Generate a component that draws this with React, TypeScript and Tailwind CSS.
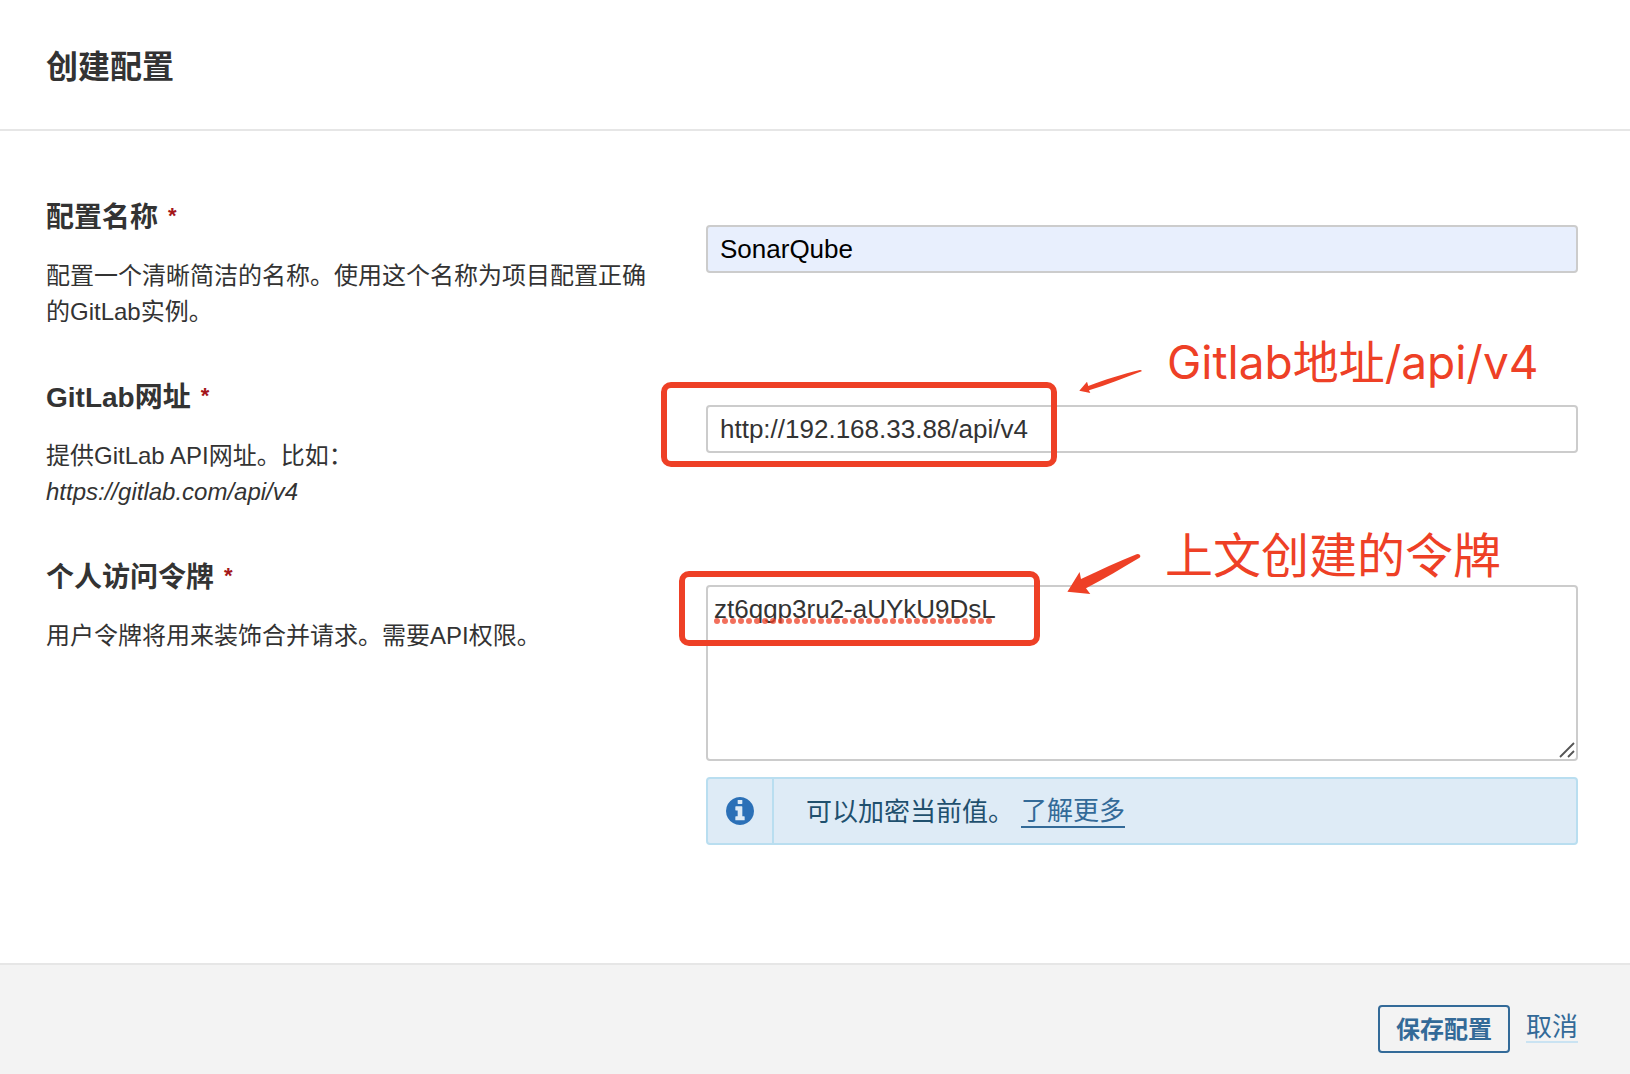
import { useState } from "react";
import type { ReactNode } from "react";

interface FieldProps {
  id: string;
  label: string;
  description: ReactNode;
  children: ReactNode;
}

const SPELL_DOTS = Array.from({ length: 35 }, (_, i) => 3 + i * 8);

function Field({ id, label, description, children }: FieldProps) {
  return (
    <div className="grid grid-cols-[604px_1fr] gap-x-14">
      <div>
        <label htmlFor={id} className="flex items-start text-[28px] leading-10 font-bold">
          {label}
          <span className="ml-2.5 text-[22px] leading-9 text-[#a4161a]">*</span>
        </label>
        <p className="mt-5 text-2xl leading-9">{description}</p>
      </div>
      <div className="relative pt-[27px]">{children}</div>
    </div>
  );
}

function InfoIcon() {
  return (
    <svg viewBox="128 128 1536 1536" className="size-7 fill-[#2b70b7]" aria-hidden="true">
      <path d="M1152 1376v-160q0-14-9-23t-23-9h-96v-512q0-14-9-23t-23-9h-320q-14 0-23 9t-9 23v160q0 14 9 23t23 9h96v320h-96q-14 0-23 9t-9 23v160q0 14 9 23t23 9h448q14 0 23-9t9-23zm-128-896v-160q0-14-9-23t-23-9h-192q-14 0-23 9t-9 23v160q0 14 9 23t23 9h192q14 0 23-9t9-23zm640 416q0 209-103 385.5t-279.5 279.5-385.5 103-385.5-103-279.5-279.5-103-385.5 103-385.5 279.5-279.5 385.5-103 385.5 103 279.5 279.5 103 385.5z" />
    </svg>
  );
}

export default function App() {
  const [name, setName] = useState("SonarQube");
  const [url, setUrl] = useState("http://192.168.33.88/api/v4");
  const [token, setToken] = useState("zt6qgp3ru2-aUYkU9DsL");

  return (
    <form
      onSubmit={(e) => e.preventDefault()}
      className="flex min-h-screen flex-col bg-white font-['Liberation_Sans','Noto_Sans_CJK_SC',sans-serif] text-[#333]"
    >
      <header className="border-b-2 border-[#e6e6e6] px-[46px] pt-[45px] pb-10">
        <h1 className="text-[32px] leading-11 font-bold">创建配置</h1>
      </header>

      <main className="flex flex-col gap-12 pt-[67px] pr-[52px] pb-[118px] pl-[46px]">
        <Field
          id="name"
          label="配置名称"
          description="配置一个清晰简洁的名称。使用这个名称为项目配置正确的GitLab实例。"
        >
          <input
            id="name"
            type="text"
            value={name}
            onChange={(e) => setName(e.target.value)}
            className="block h-12 w-full rounded border-2 border-[#ccc] bg-[#e8effd] px-3 text-[26px] text-black outline-none"
          />
        </Field>

        <Field
          id="url"
          label="GitLab网址"
          description={
            <>
              提供GitLab API网址。比如：
              <br />
              <em>https://gitlab.com/api/v4</em>
            </>
          }
        >
          <input
            id="url"
            type="text"
            value={url}
            onChange={(e) => setUrl(e.target.value)}
            className="block h-12 w-full rounded border-2 border-[#ccc] bg-white px-3 text-[26px] outline-none"
          />
          <div className="pointer-events-none absolute top-1 -left-[45px] h-[85px] w-[396px] rounded-[10px] border-6 border-[#ee4026]" />
          <svg
            viewBox="0 0 64 24"
            className="pointer-events-none absolute -top-2 left-[373px] h-6 w-16 fill-[#ee4026]"
            aria-hidden="true"
          >
            <path d="M0.3 20.7 8 11.7 9.3 16 C25 10 44 4 61 0 Q63 0 62.7 1.3 C45 8 28 15 10 20.3 L11.3 23Z" />
          </svg>
          <p className="pointer-events-none absolute -top-11 left-[461px] font-['Inter','Noto_Sans_CJK_SC',sans-serif] text-[46px] leading-14 whitespace-nowrap text-[#ee4026]">
            Gitlab地址/api/v4
          </p>
        </Field>

        <Field id="token" label="个人访问令牌" description="用户令牌将用来装饰合并请求。需要API权限。">
          <div className="relative">
            <textarea
              id="token"
              spellCheck={false}
              value={token}
              onChange={(e) => setToken(e.target.value)}
              className="block h-44 w-full resize-none rounded border-2 border-[#ccc] bg-white p-1.5 text-[26px] leading-8 outline-none"
            />
            <svg
              viewBox="0 0 280 6"
              className="pointer-events-none absolute top-[33px] left-2 h-1.5 w-[280px] fill-[#ee4026]/75"
              aria-hidden="true"
            >
              {SPELL_DOTS.map((x) => (
                <circle key={x} cx={x} cy={3} r={3} />
              ))}
            </svg>
            <svg
              viewBox="0 0 16 16"
              className="pointer-events-none absolute right-[3px] bottom-[3px] size-4 stroke-[#555]"
              aria-hidden="true"
            >
              <path d="M1 15 15 1M9 15l6-6" strokeWidth="1.8" />
            </svg>
          </div>
          <div className="mt-4 flex h-17 rounded border-2 border-[#b9def0] bg-[#deebf6] text-[26px] text-[#1f506e]">
            <div className="flex w-[66px] items-center justify-center border-r-2 border-[#b9def0]">
              <InfoIcon />
            </div>
            <p className="flex items-center gap-[7px] pt-0.5 pl-8">
              可以加密当前值。
              <a href="#encryption" className="border-b-2 border-[#336a98] leading-[30px] text-[#336a98]">
                了解更多
              </a>
            </p>
          </div>
          <div className="pointer-events-none absolute top-[13px] -left-[27px] h-[75px] w-[361px] rounded-[10px] border-6 border-[#ee4026]" />
          <svg
            viewBox="0 0 76 42"
            className="pointer-events-none absolute -top-[5px] left-[360px] h-[42px] w-[76px] fill-[#ee4026]"
            aria-hidden="true"
          >
            <path d="M1.4 38.7 13.6 19 15 26 C34 17 52 9 70.6 1.3 Q73.5 0.5 74.3 2.7 Q74.5 4 73.5 4.7 C56 15 38 26 20 35.3 L24.3 41Z" />
          </svg>
          <p className="pointer-events-none absolute -top-[30px] left-[459px] font-['Inter','Noto_Sans_CJK_SC',sans-serif] text-5xl leading-14 whitespace-nowrap text-[#ee4026]">
            上文创建的令牌
          </p>
        </Field>
      </main>

      <footer className="flex grow items-start justify-end gap-4 border-t-2 border-[#e6e6e6] bg-[#f3f3f3] pt-10 pr-[52px] pb-5 text-[#336a98]">
        <button
          type="submit"
          className="h-12 rounded border-2 border-[#336a98] px-4 pt-0.5 text-2xl leading-none font-bold"
        >
          保存配置
        </button>
        <a href="#cancel" className="mt-2 border-b-2 border-[#cae3f2] text-[26px] leading-7">
          取消
        </a>
      </footer>
    </form>
  );
}
